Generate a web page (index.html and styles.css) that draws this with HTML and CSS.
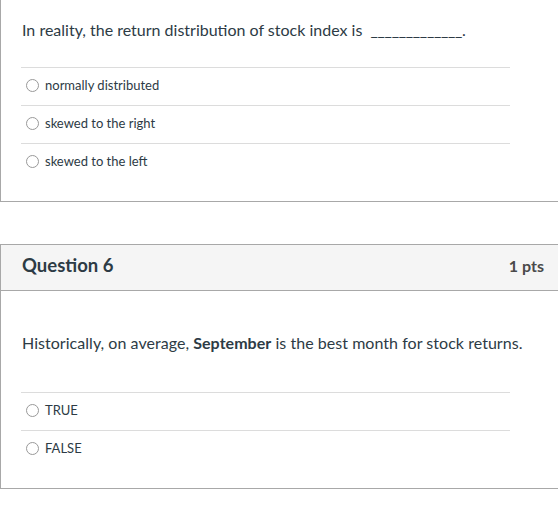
FILE: index.html
```html
<!DOCTYPE html>
<html>
<head>
<meta charset="utf-8">
<link rel="stylesheet" href="styles.css">
</head>
<body>
<div class="card card-first">
  <div class="card-body">
    <p class="question-text">In reality, the return distribution of stock index is &nbsp;<span class="blank">_____________</span>.</p>
    <div class="answers">
      <label class="answer"><span class="radio"></span><span class="answer-label">normally distributed</span></label>
      <label class="answer"><span class="radio"></span><span class="answer-label">skewed to the right</span></label>
      <label class="answer"><span class="radio"></span><span class="answer-label">skewed to the left</span></label>
    </div>
  </div>
</div>

<div class="card card-second">
  <div class="card-header">
    <span class="q-title">Question 6</span>
    <span class="q-points">1 pts</span>
  </div>
  <div class="card-body">
    <p class="question-text question-text-2">Historically, on average, <strong>September</strong> is the best month for stock returns.</p>
    <div class="answers answers-2">
      <label class="answer"><span class="radio"></span><span class="answer-label">TRUE</span></label>
      <label class="answer"><span class="radio"></span><span class="answer-label">FALSE</span></label>
    </div>
  </div>
</div>
</body>
</html>
```

FILE: styles.css
```css
html, body {
  margin: 0;
  padding: 0;
  background: #ffffff;
}
body {
  font-family: Lato, "Liberation Sans", sans-serif;
  color: #2d3b45;
  overflow: hidden;
}
.card {
  border-left: 1px solid #a8a8a8;
  border-bottom: 1px solid #a8a8a8;
  background: #fff;
}
.card-second {
  margin-top: 42px;
  border-top: 1px solid #a8a8a8;
}
.card-body {
  padding: 20px 20px 20px 20px;
}
.question-text {
  margin: 0;
  font-size: 16px;
  line-height: 20px;
  padding-left: 1px;
  white-space: nowrap;
}
.question-text-2 {
  margin-top: 22px;
  letter-spacing: 0.04px;
}
.blank {
  letter-spacing: -0.3px;
}
.answers {
  margin-top: 27px;
  margin-right: 28px;
}
.answers-2 {
  margin-top: 39px;
}
.answer {
  display: flex;
  align-items: center;
  gap: 6px;
  box-sizing: border-box;
  height: 38px;
  border-top: 1px solid #dcdcdc;
  padding-left: 5px;
  padding-bottom: 3px;
}
.radio {
  box-sizing: border-box;
  width: 13px;
  height: 13px;
  border: 1px solid #999999;
  border-radius: 50%;
  background: #fff;
  flex: none;
  margin-top: 1px;
}
.answer-label {
  font-size: 13px;
  line-height: 18px;
  color: #2d3b45;
}
.card-header {
  display: flex;
  justify-content: space-between;
  align-items: center;
  box-sizing: border-box;
  height: 46px;
  background: #f5f5f5;
  border-bottom: 1px solid #a8a8a8;
  padding: 0 14px 5px 21px;
}
.q-title {
  font-size: 18.5px;
  font-weight: 700;
}
.q-points {
  font-size: 16px;
  font-weight: 700;
  color: #4a4a4a;
}
```
